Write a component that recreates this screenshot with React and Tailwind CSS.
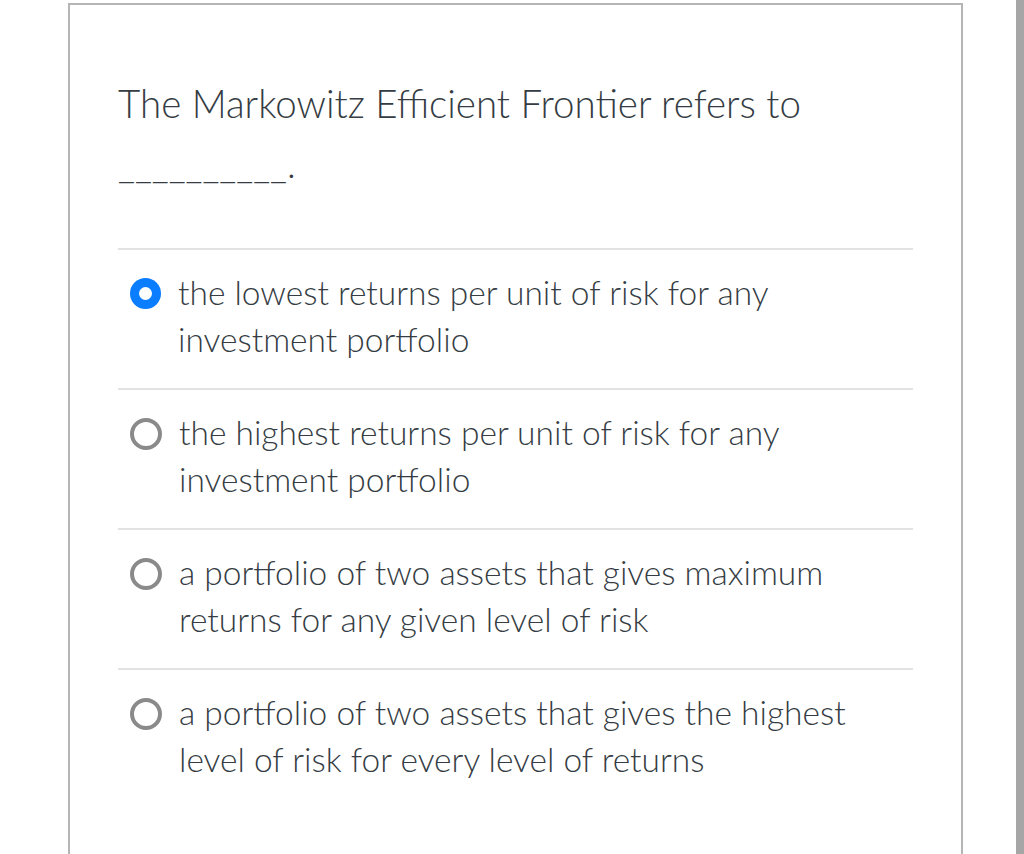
import React from "react";

const options = [
  { text: "the lowest returns per unit of risk for any investment portfolio", selected: true },
  { text: "the highest returns per unit of risk for any investment portfolio" },
  { text: "a portfolio of two assets that gives maximum returns for any given level of risk" },
  { text: "a portfolio of two assets that gives the highest level of risk for every level of returns" },
];

const Radio = ({ selected }) =>
  selected ? (
    <span className="mt-[9px] flex h-[31px] w-[31px] shrink-0 items-center justify-center rounded-full bg-[#0b7dff]">
      <span className="h-[13px] w-[13px] rounded-full bg-white" />
    </span>
  ) : (
    <span className="mt-[9px] block h-[32px] w-[32px] shrink-0 rounded-full border-[4px] border-[#8a8a8a]" />
  );

export default function App() {
  return (
    <div
      className="flex h-[854px] w-full overflow-hidden bg-white font-light text-[#353c43]"
      style={{ fontFamily: "Lato, 'Open Sans', sans-serif" }}
    >
      <div className="ml-[68px] mt-[3px] h-[900px] w-[895px] shrink-0 border-2 border-b-0 border-[#b5b5b5] px-[48px] pt-[74px]">
        <p className="text-[38.5px] leading-[48px]">The Markowitz Efficient Frontier refers to</p>
        <p className="mt-[17px] text-[37.5px] leading-[40px]">__________.</p>

        <div className="mt-[64px]">
          {options.map((o, i) => (
            <div key={i} className="flex h-[140px] items-start gap-[17px] border-t-2 border-[#e2e2e2] pl-[12px] pt-[19px]">
              <Radio selected={o.selected} />
              <p className="flex-1 text-[33.5px] leading-[47px]">{o.text}</p>
            </div>
          ))}
        </div>
      </div>
      <div className="flex-1" />
      <div className="h-full w-[8px] bg-[#a6a6a6]" />
    </div>
  );
}
